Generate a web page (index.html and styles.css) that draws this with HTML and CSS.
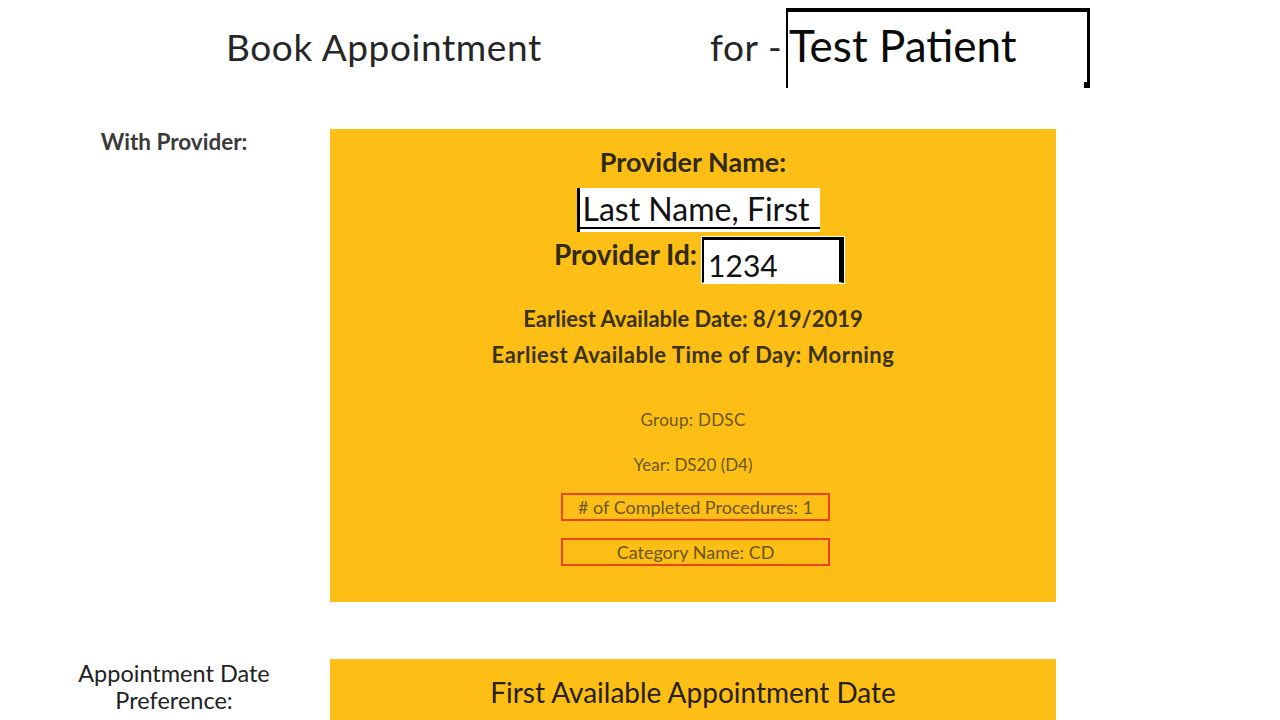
FILE: index.html
```html
<!DOCTYPE html>
<html>
<head>
<meta charset="utf-8">
<link rel="stylesheet" href="styles.css">
</head>
<body>
<header class="top">
  <h1 class="title">Book Appointment</h1>
  <span class="for">for -</span>
  <div class="patient"><span class="patient-name">Test Patient</span><span class="corner"></span></div>
</header>
<main class="form">
  <section class="row">
    <div class="label">With Provider:</div>
    <div class="card provider">
      <div class="pname">Provider Name:</div>
      <div class="name-input">Last Name, First</div>
      <div class="id-row">
        <span class="id-label">Provider Id:</span>
        <span class="id-input">1234</span>
      </div>
      <div class="earliest first">Earliest Available Date: 8/19/2019</div>
      <div class="earliest second-line">Earliest Available Time of Day: Morning</div>
      <div class="small group">Group: DDSC</div>
      <div class="small year">Year: DS20 (D4)</div>
      <div class="small boxed">#&nbsp;of Completed Procedures: 1</div>
      <div class="small boxed cat">Category Name: CD</div>
    </div>
  </section>
  <section class="row second">
    <div class="label">Appointment Date<br>Preference:</div>
    <div class="card pref">First Available Appointment Date</div>
  </section>
</main>
</body>
</html>
```
FILE: styles.css
```css
html, body {
  margin: 0;
  padding: 0;
  background: #ffffff;
  height: 720px;
  overflow: hidden;
}
body {
  font-family: "Lato", "Open Sans", sans-serif;
  color: #2b2b2b;
}
.top {
  display: flex;
  align-items: flex-start;
  height: 88px;
  padding-top: 8px;
  box-sizing: border-box;
}
.title {
  margin: 0 0 0 226px;
  font-weight: 400;
  font-size: 37px;
  line-height: 1;
  padding-top: 20px;
  color: #262626;
  width: 484px;
  letter-spacing: 0.6px;
}
.for {
  font-size: 37px;
  line-height: 1;
  padding-top: 20px;
  color: #262626;
  width: 76px;
  letter-spacing: 0.6px;
}
.patient {
  position: relative;
  width: 304px;
  height: 80px;
  box-sizing: border-box;
  border-top: 4px solid #000;
  border-left: 2px solid #000;
  border-right: 3px solid #000;
  padding-left: 1px;
}
.patient-name {
  display: block;
  font-size: 44px;
  line-height: 1;
  padding-top: 11px;
  color: #0a0a0a;
}
.corner {
  position: absolute;
  right: -3px;
  bottom: 0;
  width: 6px;
  height: 6px;
  background: #000;
}
.form {
  padding-top: 41px;
}
.row {
  display: flex;
  align-items: flex-start;
}
.row.second {
  margin-top: 57px;
}
.label {
  width: 300px;
  margin-left: 24px;
  margin-right: 6px;
  text-align: center;
  font-weight: 700;
  font-size: 22.5px;
  line-height: 26px;
  color: #3a3a3a;
}
.row.second .label {
  font-weight: 400;
  font-size: 23.5px;
  line-height: 27px;
  color: #222;
  padding-top: 1px;
}
.card {
  width: 726px;
  background: #fdbf16;
  text-align: center;
}
.provider {
  height: 473px;
  box-sizing: border-box;
  padding-top: 18px;
  display: flex;
  flex-direction: column;
  align-items: center;
}
.pname {
  font-size: 27px;
  line-height: 30px;
  font-weight: 700;
  color: #2f2a10;
}
.name-input {
  margin-top: 11px;
  margin-left: 10px;
  width: 243px;
  height: 44px;
  box-sizing: border-box;
  background: #fff;
  font-size: 32px;
  line-height: 42px;
  color: #111;
  text-align: left;
  padding-left: 3px;
  border-left: 3px solid #000;
  box-shadow: inset 0 -3px 0 #fff, inset 0 -5px 0 #000;
  white-space: nowrap;
}
.id-row {
  display: flex;
  align-items: flex-start;
  margin-top: 5px;
  margin-left: 12px;
}
.id-label {
  font-size: 28px;
  line-height: 28px;
  font-weight: 700;
  color: #2f2a10;
  padding-top: 3px;
  margin-right: 5px;
}
.id-input {
  width: 142px;
  height: 46px;
  box-sizing: border-box;
  background: #fff;
  border-top: 3px solid #000;
  border-left: 2px solid #000;
  border-right: 5px solid #000;
  border-bottom: 1px solid #fff;
  outline: 1px solid #fff;
  font-size: 30px;
  line-height: 30px;
  padding-top: 10px;
  padding-left: 4px;
  text-align: left;
  color: #111;
}
.earliest {
  font-size: 22px;
  line-height: 26px;
  font-weight: 700;
  color: #3a3208;
}
.earliest.first {
  margin-top: 23px;
}
.earliest.second-line {
  margin-top: 10px;
  letter-spacing: 0.5px;
}
.small {
  font-size: 17px;
  line-height: 20px;
  color: #6a5710;
}
.group {
  margin-top: 42px;
  letter-spacing: 0.3px;
}
.year {
  margin-top: 25px;
}
.boxed {
  margin-top: 18px;
  margin-left: 5px;
  width: 269px;
  height: 28px;
  box-sizing: border-box;
  border: 2px solid #f0421c;
  line-height: 24px;
  font-size: 18px;
  white-space: nowrap;
}
.boxed.cat {
  margin-top: 17px;
}
.pref {
  height: 80px;
  box-sizing: border-box;
  padding-top: 17px;
  font-size: 28px;
  line-height: 32px;
  color: #262010;
}
```
